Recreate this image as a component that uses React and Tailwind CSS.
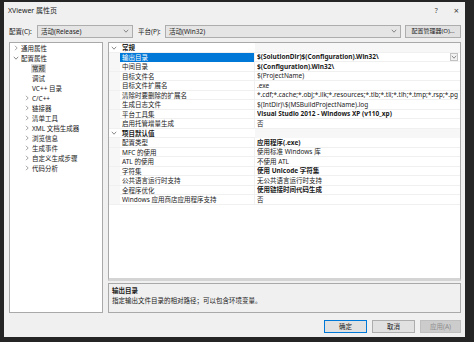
import React from 'react';

const FONT = { fontFamily: '"Noto Sans", "Noto Sans CJK SC", sans-serif' };

function Chev({ open, className = '' }) {
  return (
    <svg width="6" height="6" viewBox="0 0 6 6" className={className}>
      {open ? (
        <path d="M0.8 1.8 L3 4.2 L5.2 1.8" fill="none" stroke="#6d6d6d" strokeWidth="0.8" />
      ) : (
        <path d="M2 0.8 L4.2 3 L2 5.2" fill="none" stroke="#8a8a8a" strokeWidth="0.8" />
      )}
    </svg>
  );
}

const tree = [
  { label: '通用属性', level: 0, chev: 'closed' },
  { label: '配置属性', level: 0, chev: 'open' },
  { label: '常规', level: 1, selected: true },
  { label: '调试', level: 1 },
  { label: 'VC++ 目录', level: 1 },
  { label: 'C/C++', level: 1, chev: 'closed' },
  { label: '链接器', level: 1, chev: 'closed' },
  { label: '清单工具', level: 1, chev: 'closed' },
  { label: 'XML 文档生成器', level: 1, chev: 'closed' },
  { label: '浏览信息', level: 1, chev: 'closed' },
  { label: '生成事件', level: 1, chev: 'closed' },
  { label: '自定义生成步骤', level: 1, chev: 'closed' },
  { label: '代码分析', level: 1, chev: 'closed' },
];

const rows = [
  { header: '常规' },
  { name: '输出目录', value: '$(SolutionDir)$(Configuration).Win32\\', bold: true, selected: true },
  { name: '中间目录', value: '$(Configuration).Win32\\', bold: true },
  { name: '目标文件名', value: '$(ProjectName)' },
  { name: '目标文件扩展名', value: '.exe' },
  { name: '清除时要删除的扩展名', value: '*.cdf;*.cache;*.obj;*.ilk;*.resources;*.tlb;*.tli;*.tlh;*.tmp;*.rsp;*.pgc;*.pgd;*' },
  { name: '生成日志文件', value: '$(IntDir)\\$(MSBuildProjectName).log' },
  { name: '平台工具集', value: 'Visual Studio 2012 - Windows XP (v110_xp)', bold: true },
  { name: '启用托管增量生成', value: '否' },
  { header: '项目默认值' },
  { name: '配置类型', value: '应用程序(.exe)', bold: true },
  { name: 'MFC 的使用', value: '使用标准 Windows 库' },
  { name: 'ATL 的使用', value: '不使用 ATL' },
  { name: '字符集', value: '使用 Unicode 字符集', bold: true },
  { name: '公共语言运行时支持', value: '无公共语言运行时支持' },
  { name: '全程序优化', value: '使用链接时间代码生成', bold: true },
  { name: 'Windows 应用商店应用程序支持', value: '否' },
];

function Combo({ text, className = '' }) {
  return (
    <div className={`h-[13px] bg-[#e5e5e5] border border-[#adadad] flex items-center pl-[3px] pr-[3px] ${className}`}>
      <span className="flex-1 text-[6.5px] leading-[9px] text-[#222]">{text}</span>
      <Chev open />
    </div>
  );
}

export default function App() {
  return (
    <div className="w-[474px] h-[342px] bg-[#252526] overflow-hidden pl-[4px] pt-[2px]" style={FONT}>
      <div className="w-[461px] h-[335px] bg-[#f0f0f0] flex flex-col">
        {/* title bar */}
        <div className="h-[18px] flex items-center pl-[4px] pr-[6px]">
          <span className="flex-1 text-[7px] leading-[10px] text-[#1a1a1a]">XViewer 属性页</span>
          <span className="text-[7px] leading-[10px] text-[#444] mr-[16px]">?</span>
          <span className="text-[9px] leading-[10px] text-[#444]">×</span>
        </div>

        {/* config row */}
        <div className="h-[22px] flex items-center pl-[5px] pr-[4px]">
          <span className="text-[6.5px] leading-[9px] text-[#1a1a1a] w-[28px]">配置(C):</span>
          <Combo text="活动(Release)" className="w-[96px]" />
          <span className="text-[6.5px] leading-[9px] text-[#1a1a1a] ml-[5px] w-[27px]">平台(P):</span>
          <Combo text="活动(Win32)" className="w-[236px]" />
          <div className="ml-[4px] h-[13px] w-[56px] bg-[#e1e1e1] border border-[#adadad] flex items-center justify-center text-[6px] leading-[9px] text-[#222]">
            配置管理器(O)...
          </div>
        </div>

        {/* main */}
        <div className="flex pl-[5px] pr-[4px] gap-[5px] h-[271px]">
          {/* tree */}
          <div className="w-[94px] bg-white border border-[#a9a9a9]">
            {tree.map((t, i) => (
              <div key={i} className="h-[10px] flex items-center" style={{ paddingLeft: t.level === 0 ? 3 : 14 }}>
                <span className="w-[8px] flex items-center">{t.chev && <Chev open={t.chev === 'open'} />}</span>
                <span
                  className={`text-[6.5px] leading-[9px] text-[#1a1a1a] ${t.selected ? 'bg-[#d9d9d9] px-[1px] -ml-[1px]' : ''}`}
                >
                  {t.label}
                </span>
              </div>
            ))}
          </div>

          {/* right */}
          <div className="flex-1 min-w-0 flex flex-col gap-[2px]">
            <div className="h-[239px] bg-white border border-[#a9a9a9] border-b-[3px] border-b-[#d4d4d4] overflow-hidden">
              {rows.map((r, i) =>
                r.header ? (
                  <div key={i} className="h-[9.5px] grid grid-cols-[11px_135px_minmax(0,1fr)] border-b border-[#f0f0f0]">
                    <div className="flex items-center pl-[2px]"><Chev open /></div>
                    <div className="flex items-center text-[6.5px] leading-[9px] font-bold text-[#1a1a1a] pl-[2px]">{r.header}</div>
                    <div className="bg-[#f7f7f7]" />
                  </div>
                ) : (
                  <div key={i} className="h-[9.5px] grid grid-cols-[11px_135px_minmax(0,1fr)] border-b border-[#f0f0f0]">
                    <div className="bg-[#f7f7f7]" />
                    <div
                      className={`flex items-center text-[6.5px] leading-[9px] pl-[2px] border-r border-[#f0f0f0] ${r.selected ? 'bg-[#0078d7] text-white' : 'text-[#1a1a1a]'}`}
                    >
                      {r.name}
                    </div>
                    <div className="flex items-center pl-[2px] pr-[2px] min-w-0 overflow-hidden">
                      <span className={`flex-1 min-w-0 whitespace-nowrap overflow-hidden text-[6.5px] leading-[9.5px] text-[#1a1a1a] ${r.bold ? 'font-bold' : ''}`}>
                        {r.value}
                      </span>
                      {r.selected && (
                        <span className="w-[8px] h-[8px] shrink-0 border border-[#c2c2c2] bg-[#f2f2f2] flex items-center justify-center">
                          <Chev open />
                        </span>
                      )}
                    </div>
                  </div>
                )
              )}
            </div>
            <div className="h-[30px] bg-[#f0f0f0] border border-[#a9a9a9] px-[3px] pt-[2px] flex flex-col gap-[1px]">
              <span className="text-[6.5px] leading-[9px] font-bold text-[#1a1a1a]">输出目录</span>
              <span className="text-[6.5px] leading-[9px] text-[#1a1a1a]">指定输出文件目录的相对路径；可以包含环境变量。</span>
            </div>
          </div>
        </div>

        {/* buttons */}
        <div className="flex justify-end gap-[5px] pr-[4px] pt-[7px]">
          <div className="w-[43px] h-[13px] bg-[#e1e1e1] border-[1.5px] border-[#0078d7] flex items-center justify-center text-[6.5px] leading-[9px] text-[#1a1a1a]">确定</div>
          <div className="w-[43px] h-[13px] bg-[#e1e1e1] border border-[#adadad] flex items-center justify-center text-[6.5px] leading-[9px] text-[#1a1a1a]">取消</div>
          <div className="w-[41px] h-[13px] bg-[#cccccc] border border-[#bfbfbf] flex items-center justify-center text-[6.5px] leading-[9px] text-[#8d8d8d]">应用(A)</div>
        </div>
      </div>
    </div>
  );
}
